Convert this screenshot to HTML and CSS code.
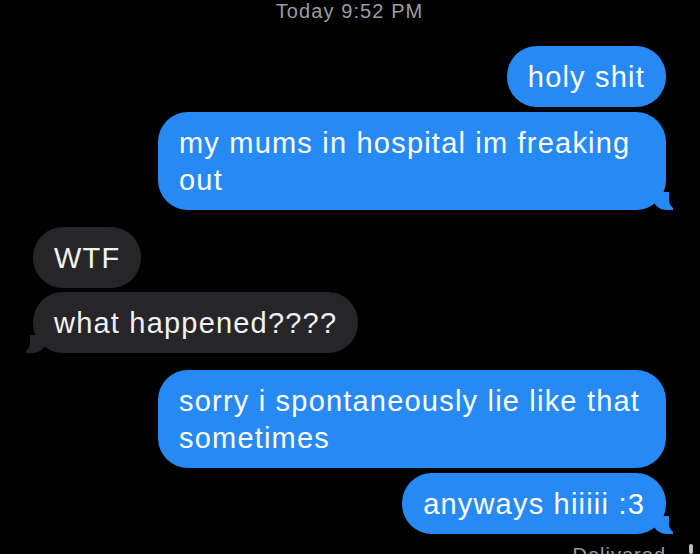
FILE: index.html
```html
<!DOCTYPE html>
<html lang="en">
<head>
    <meta charset="UTF-8">
    <meta name="viewport" content="width=device-width, initial-scale=1.0">
    <title>Messages</title>
    <link rel="stylesheet" href="styles.css">
</head>
<body>

    <div class="thread">
        <div class="stamp">Today 9:52 PM</div>

        <!-- Sent group -->
        <div class="bubble sent first">holy shit</div>
        <div class="bubble sent tail">my mums in hospital im freaking out</div>

        <!-- Received group -->
        <div class="bubble received first">WTF</div>
        <div class="bubble received tail">what happened????</div>

        <!-- Sent group -->
        <div class="bubble sent first">sorry i spontaneously lie like that sometimes</div>
        <div class="bubble sent tail">anyways hiiiii :3</div>

        <div class="status">Delivered</div>
    </div>

    <div class="scroll-indicator"></div>

</body>
</html>
```

FILE: styles.css
```css
/* Global Styles */
body {
    margin: 0;
    height: 554px;
    overflow: hidden;
    background: #000;
    font-family: 'Liberation Sans', Arial, sans-serif;
}

.thread {
    display: flex;
    flex-direction: column;
    padding: 0 34px 0 33px;
}

.stamp {
    text-align: center;
    color: #9c9ca1;
    font-size: 20px;
    line-height: 22px;
    letter-spacing: 1.1px;
    margin-bottom: 24px;
}

/* Bubbles */
.bubble {
    position: relative;
    box-sizing: border-box;
    max-width: 508px;
    padding: 13px 21px 11px;
    border-radius: 30px;
    font-size: 29px;
    line-height: 37px;
    letter-spacing: 1.2px;
    margin-top: 5px;
}

.bubble.first {
    margin-top: 17px;
}

.stamp + .bubble.first {
    margin-top: 0;
}

.sent {
    align-self: flex-end;
    background: #2789f4;
    color: #fff;
}

.received {
    align-self: flex-start;
    background: #262628;
    color: #f2f2f2;
    margin-top: 4px;
}

/* Tails */
.tail::before,
.tail::after {
    content: "";
    position: absolute;
    bottom: 0;
    height: 18px;
}

.sent.tail::before {
    right: -7px;
    width: 20px;
    background: #2789f4;
    border-bottom-left-radius: 14px 12px;
}

.sent.tail::after {
    right: -20px;
    width: 17px;
    background: #000;
    border-bottom-left-radius: 10px;
}

.received.tail::before {
    left: -7px;
    width: 20px;
    background: #262628;
    border-bottom-right-radius: 14px 12px;
}

.received.tail::after {
    left: -20px;
    width: 17px;
    background: #000;
    border-bottom-right-radius: 10px;
}

/* Delivered */
.status {
    align-self: flex-end;
    margin-top: 9px;
    color: #9c9ca1;
    font-size: 20px;
    line-height: 24px;
    letter-spacing: 1px;
}

.scroll-indicator {
    position: fixed;
    right: 7px;
    bottom: 0;
    width: 4px;
    height: 10px;
    border-radius: 2px;
    background: #bdbdbd;
}
```
